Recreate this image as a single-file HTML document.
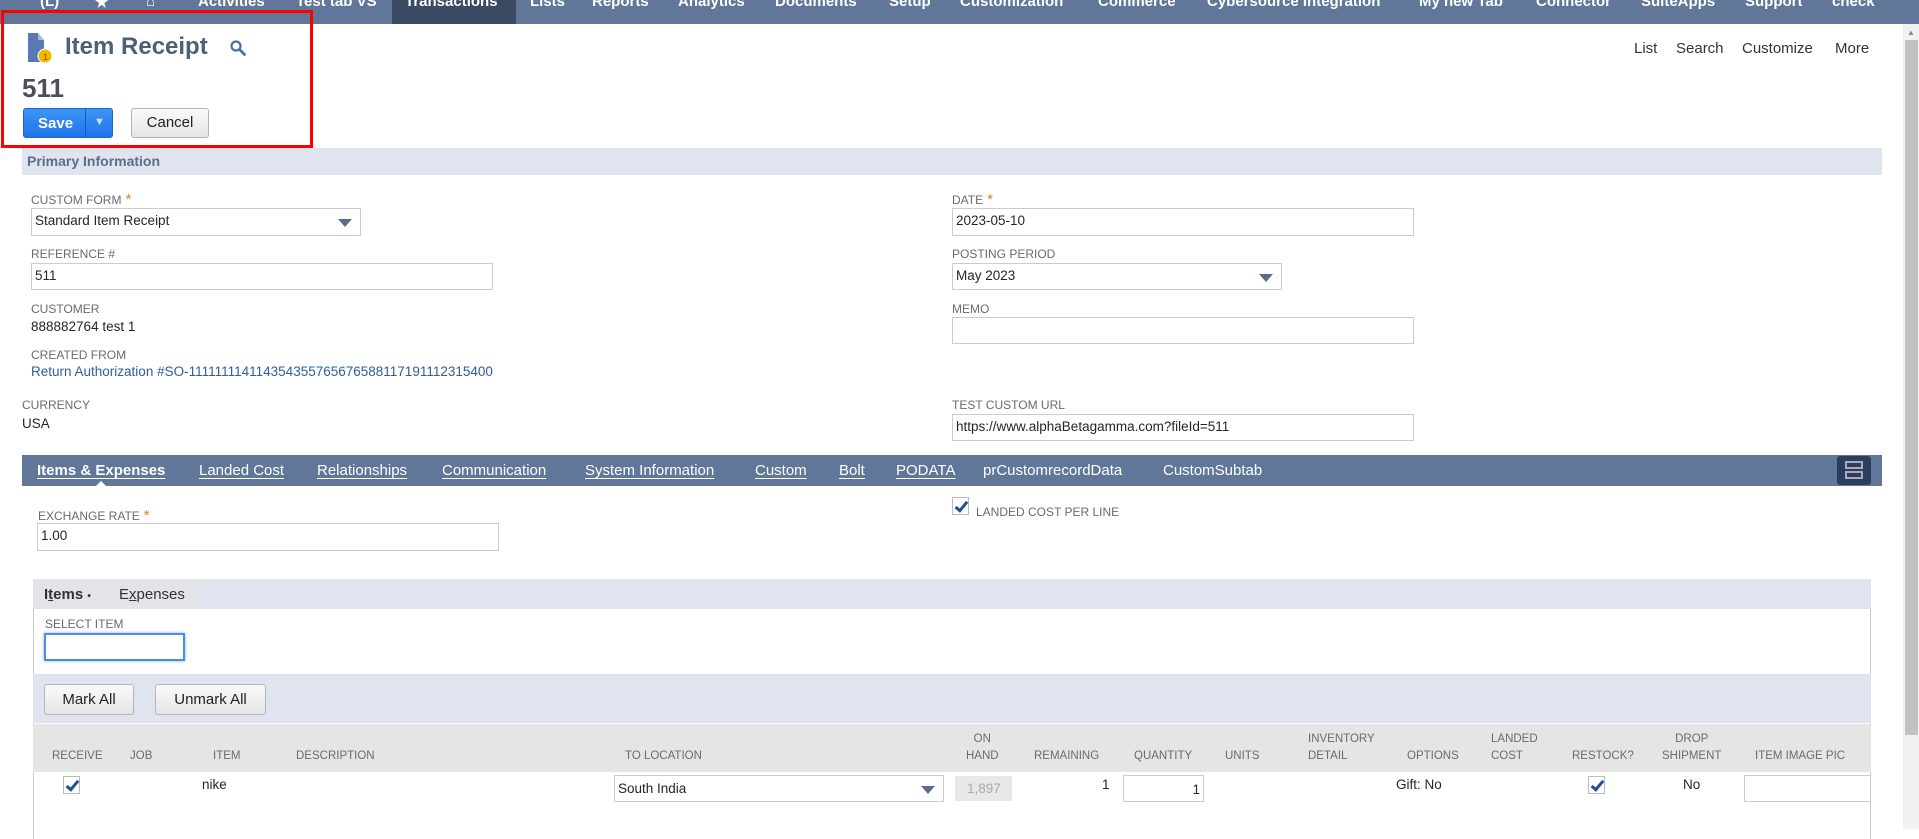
<!DOCTYPE html>
<html><head><meta charset="utf-8"><style>
*{box-sizing:border-box;margin:0;padding:0}
body{width:1919px;height:829px;overflow:hidden;background:#fff;font-family:"Liberation Sans",Arial,sans-serif;color:#262626;position:relative}
.a{position:absolute;white-space:nowrap}
.nav{position:absolute;left:0;top:0;width:1919px;height:24px;background:#607799}
.nav span{position:absolute;top:-7px;color:#fff;font-weight:bold;font-size:15px}
.lbl{position:absolute;font-size:12px;color:#6b6b6b;text-transform:uppercase;white-space:nowrap}
.req{color:#d9851c;font-size:15px;margin-left:4px}
.val{position:absolute;font-size:13.5px;color:#262626;white-space:nowrap}
.inp{position:absolute;border:1px solid #ccc;background:#fff;font-size:13.5px;padding:4px 3px;height:27px;white-space:nowrap}
.tri{position:absolute;right:8px;top:10px;width:0;height:0;border-left:7px solid transparent;border-right:7px solid transparent;border-top:8px solid #5a6e8c}
.tabs span{position:absolute;top:462px;color:#fff;font-size:15px;text-decoration:underline;text-decoration-thickness:1px;text-underline-offset:3px}
.hd{position:absolute;font-size:11.5px;color:#6b6b6b;text-align:center;line-height:17px}
.cb{position:absolute;width:17px;height:18px;border:1px solid #bbb;background:#fff}
.cb:after{content:"";position:absolute;left:5px;top:1px;width:4px;height:10px;border:solid #24508f;border-width:0 3px 3px 0;transform:rotate(40deg)}
.btn{position:absolute;border:1px solid #b5b5b5;border-radius:3px;background:linear-gradient(#fafafa,#e5e5e5);font-size:15px;color:#222;text-align:center}
</style></head><body>
<div class="nav">
<span style="left:40px">(L)</span><span style="left:95px">★</span><span style="left:146px">⌂</span>
<span style="left:198px">Activities</span><span style="left:296px">Test tab VS</span>
<div style="position:absolute;left:392px;top:0;width:124px;height:24px;background:#3b4a63"></div>
<span style="left:405px">Transactions</span><span style="left:530px">Lists</span><span style="left:592px">Reports</span><span style="left:678px">Analytics</span><span style="left:775px">Documents</span><span style="left:889px">Setup</span><span style="left:960px">Customization</span><span style="left:1098px">Commerce</span><span style="left:1207px">Cybersource Integration</span><span style="left:1419px">My new Tab</span><span style="left:1536px">Connector</span><span style="left:1641px">SuiteApps</span><span style="left:1745px">Support</span><span style="left:1832px">check</span>
</div>
<div style="position:absolute;left:1903px;top:24px;width:16px;height:805px;background:#f1f1f1"></div>
<div style="position:absolute;left:1905px;top:40px;width:13px;height:695px;background:#c1c1c1"></div>
<div class="a" style="left:1907px;top:28px;font-size:8px;color:#888">▲</div>

<div style="position:absolute;left:1px;top:10px;width:312px;height:138px;border:3px solid #f00"></div>
<svg class="a" style="left:26px;top:32px" width="30" height="32" viewBox="0 0 30 32"><path d="M2 1h10l6 7v22H2z" fill="#5a78b5"/><path d="M12 1v7h6z" fill="#a9b9dc"/><circle cx="19" cy="24" r="7" fill="#f2b600" stroke="#fff" stroke-width="1"/><text x="17" y="28" font-size="9" fill="#7a5a00" font-family="Liberation Sans">1</text></svg>
<div class="a" style="left:65px;top:33px;font-size:24px;color:#4d5f79;font-weight:bold">Item Receipt</div>
<svg class="a" style="left:229px;top:39px" width="18" height="18" viewBox="0 0 18 18"><circle cx="7" cy="7" r="4.5" fill="none" stroke="#4d6fa8" stroke-width="2.2"/><path d="M10.5 10.5l5 5" stroke="#4d6fa8" stroke-width="2.8" stroke-linecap="round"/></svg>
<div class="a" style="left:22px;top:73px;font-size:26px;color:#4a4f5a;font-weight:bold">511</div>
<div style="position:absolute;left:23px;top:108px;width:90px;height:30px;border-radius:3px;background:linear-gradient(#3d95f7,#1f74e8);border:1px solid #1a66cc"></div>
<div class="a" style="left:38px;top:115px;color:#fff;font-weight:bold;font-size:15px">Save</div>
<div style="position:absolute;left:85px;top:109px;width:1px;height:28px;background:#1659b8"></div>
<div class="a" style="left:94px;top:116px;color:#cfe0fb;font-size:11px">▼</div>
<div class="btn" style="left:131px;top:108px;width:78px;height:30px;line-height:28px">Cancel</div>

<div class="a" style="left:1634px;top:40px;font-size:15px;color:#333">List</div>
<div class="a" style="left:1676px;top:40px;font-size:15px;color:#333">Search</div>
<div class="a" style="left:1742px;top:40px;font-size:15px;color:#333">Customize</div>
<div class="a" style="left:1835px;top:40px;font-size:15px;color:#333">More</div>

<div style="position:absolute;left:22px;top:148px;width:1860px;height:27px;background:#dfe4ee"></div>
<div class="a" style="left:27px;top:153px;font-size:14px;font-weight:bold;color:#5a6e8c">Primary Information</div>

<div class="lbl" style="left:31px;top:191px">Custom Form<span class="req">*</span></div>
<div class="inp" style="left:31px;top:208px;width:330px;height:28px">Standard Item Receipt<div class="tri"></div></div>
<div class="lbl" style="left:31px;top:247px">Reference #</div>
<div class="inp" style="left:31px;top:263px;width:462px">511</div>
<div class="lbl" style="left:31px;top:302px">Customer</div>
<div class="val" style="left:31px;top:319px">888882764 test 1</div>
<div class="lbl" style="left:31px;top:348px">Created From</div>
<div class="val" style="left:31px;top:364px;color:#2d5ea0">Return Authorization #SO-111111114114354355765676588117191112315400</div>
<div class="lbl" style="left:22px;top:398px">Currency</div>
<div class="val" style="left:22px;top:416px">USA</div>

<div class="lbl" style="left:952px;top:191px">Date<span class="req">*</span></div>
<div class="inp" style="left:952px;top:208px;width:462px;height:28px">2023-05-10</div>
<div class="lbl" style="left:952px;top:247px">Posting Period</div>
<div class="inp" style="left:952px;top:263px;width:330px">May 2023<div class="tri"></div></div>
<div class="lbl" style="left:952px;top:302px">Memo</div>
<div class="inp" style="left:952px;top:317px;width:462px"></div>
<div class="lbl" style="left:952px;top:398px">Test Custom URL</div>
<div class="inp" style="left:952px;top:414px;width:462px">https://www.alphaBetagamma.com?fileId=511</div>

<div style="position:absolute;left:22px;top:455px;width:1860px;height:31px;background:#607799"></div>
<div class="tabs">
<span style="left:37px;font-weight:bold">Items &amp; Expenses</span><span style="left:199px">Landed Cost</span><span style="left:317px">Relationships</span><span style="left:442px">Communication</span><span style="left:585px">System Information</span><span style="left:755px">Custom</span><span style="left:839px">Bolt</span><span style="left:896px">PODATA</span><span style="left:983px;text-decoration:none">prCustomrecordData</span><span style="left:1163px;text-decoration:none">CustomSubtab</span>
</div>
<div class="a" style="left:96px;top:481px;width:0;height:0;border-left:5px solid transparent;border-right:5px solid transparent;border-bottom:5px solid #fff"></div>
<div style="position:absolute;left:1837px;top:456px;width:34px;height:29px;background:#2c3e5e;border-radius:3px"></div>
<div style="position:absolute;left:1845px;top:461px;width:18px;height:8px;border:2px solid #aab"></div>
<div style="position:absolute;left:1845px;top:471px;width:18px;height:8px;border:2px solid #aab"></div>

<div class="lbl" style="left:38px;top:507px">Exchange Rate<span class="req">*</span></div>
<div class="inp" style="left:37px;top:523px;width:462px;height:28px">1.00</div>
<div class="cb" style="left:952px;top:497px"></div>
<div class="lbl" style="left:976px;top:505px">Landed Cost per Line</div>

<div style="position:absolute;left:33px;top:579px;width:1838px;height:260px;border-left:1px solid #ccc;border-right:1px solid #ccc"></div>
<div style="position:absolute;left:33px;top:579px;width:1838px;height:30px;background:#dfe4ee"></div>
<div style="position:absolute;left:33px;top:579px;width:165px;height:30px;background:#e3e4e8"></div>
<div class="a" style="left:44px;top:586px;font-size:15px;font-weight:bold;color:#333">I<u>t</u>ems <span style="font-size:10px">•</span></div>
<div class="a" style="left:119px;top:586px;font-size:15px;color:#333">E<u>x</u>penses</div>
<div class="lbl" style="left:45px;top:617px">Select Item</div>
<div style="position:absolute;left:44px;top:633px;width:141px;height:28px;border:2px solid #4b8ee0;box-shadow:0 0 3px #7ab0f0;background:#fff"></div>
<div style="position:absolute;left:33px;top:674px;width:1838px;height:49px;background:#dfe4ee"></div>
<div class="btn" style="left:44px;top:684px;width:90px;height:31px;line-height:29px">Mark All</div>
<div class="btn" style="left:155px;top:684px;width:111px;height:31px;line-height:29px">Unmark All</div>
<div style="position:absolute;left:33px;top:724px;width:1838px;height:48px;background:#e5e5e5"></div>
<div class="hd" style="left:52px;top:748px">RECEIVE</div>
<div class="hd" style="left:130px;top:748px">JOB</div>
<div class="hd" style="left:213px;top:748px">ITEM</div>
<div class="hd" style="left:296px;top:748px">DESCRIPTION</div>
<div class="hd" style="left:625px;top:748px">TO LOCATION</div>
<div class="hd" style="left:966px;top:731px">ON<br>HAND</div>
<div class="hd" style="left:1034px;top:748px">REMAINING</div>
<div class="hd" style="left:1134px;top:748px">QUANTITY</div>
<div class="hd" style="left:1225px;top:748px">UNITS</div>
<div class="hd" style="left:1308px;top:731px;text-align:left">INVENTORY<br>DETAIL</div>
<div class="hd" style="left:1407px;top:748px">OPTIONS</div>
<div class="hd" style="left:1491px;top:731px;text-align:left">LANDED<br>COST</div>
<div class="hd" style="left:1572px;top:748px">RESTOCK?</div>
<div class="hd" style="left:1662px;top:731px">DROP<br>SHIPMENT</div>
<div class="hd" style="left:1755px;top:748px">ITEM IMAGE PIC</div>

<div class="cb" style="left:63px;top:776px"></div>
<div class="val" style="left:202px;top:777px">nike</div>
<div class="inp" style="left:614px;top:775px;width:330px;height:27px;padding-top:5px">South India<div class="tri"></div></div>
<div style="position:absolute;left:955px;top:776px;width:57px;height:25px;background:#e8e8e8"></div>
<div class="val" style="left:967px;top:781px;color:#aaa">1,897</div>
<div class="val" style="left:1102px;top:777px">1</div>
<div class="inp" style="left:1123px;top:775px;width:81px;text-align:right;padding-top:6px">1</div>
<div class="val" style="left:1396px;top:777px">Gift: No</div>
<div class="cb" style="left:1588px;top:776px"></div>
<div class="val" style="left:1683px;top:777px">No</div>
<div class="inp" style="left:1744px;top:775px;width:127px"></div>
</body></html>
